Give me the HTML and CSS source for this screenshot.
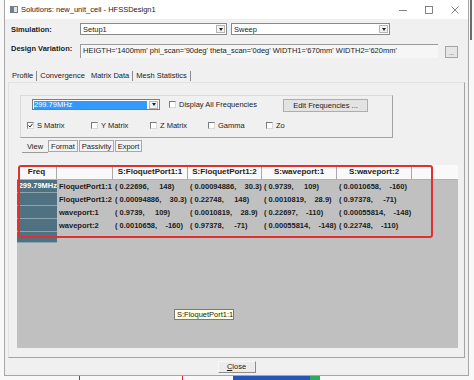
FILE: index.html
```html
<!DOCTYPE html>
<html lang="en">
<head>
    <meta charset="UTF-8">
    <title>Solutions: new_unit_ceil - HFSSDesign1</title>
    <link rel="stylesheet" href="styles.css">
</head>
<body>
    <div class="desk">
        <div class="window">
            <div class="titlebar">
                <svg class="app-icon" width="8" height="7" viewBox="0 0 8 7">
                    <rect x="0.5" y="0.5" width="7" height="6" fill="#e4e4e4" stroke="#7c7c7c"/>
                    <rect x="1" y="1" width="3" height="5" fill="#5d86a6"/>
                </svg>
                <span class="title">Solutions: new_unit_ceil - HFSSDesign1</span>
                <div class="controls">
                    <span class="ctl"><svg width="8" height="8" viewBox="0 0 8 8"><line x1="0" y1="4.5" x2="8" y2="4.5" stroke="#666" stroke-width="0.8"/></svg></span>
                    <span class="ctl"><svg width="8" height="8" viewBox="0 0 8 8"><rect x="0.5" y="0.5" width="7" height="7" fill="none" stroke="#666" stroke-width="0.8"/></svg></span>
                    <span class="ctl"><svg width="8" height="8" viewBox="0 0 8 8"><path d="M0.5 0.5 L7.5 7.5 M7.5 0.5 L0.5 7.5" stroke="#666" stroke-width="0.8"/></svg></span>
                </div>
            </div>

            <div class="row sim-row">
                <span class="lbl">Simulation:</span>
                <div class="combo setup"><span class="txt">Setup1</span><i class="arrow"></i></div>
                <div class="combo sweep"><span class="txt">Sweep</span><i class="arrow"></i></div>
            </div>

            <div class="row var-row">
                <span class="lbl">Design Variation:</span>
                <div class="varfield">HEIGTH='1400mm' phi_scan='90deg' theta_scan='0deg' WIDTH1='670mm' WIDTH2='620mm'</div>
                <button class="dots">...</button>
            </div>

            <div class="tabs">
                <span class="tab">Profile</span><span class="sep"></span>
                <span class="tab">Convergence</span>
                <span class="tab active">Matrix Data</span><span class="sep"></span>
                <span class="tab">Mesh Statistics</span><span class="sep"></span>
            </div>

            <div class="panel">
                <div class="group">
                    <div class="group-row">
                        <div class="freq-select"><span class="sel">299.79MHz</span><i class="arrow"></i></div>
                        <label class="check all-freq"><span class="box"></span>Display All Frequencies</label>
                        <button class="edit-btn">Edit Frequencies ...</button>
                    </div>
                    <div class="checks">
                        <label class="check w64"><span class="box on"><svg width="5" height="5" viewBox="0 0 5 5"><path d="M0.5 2.5 L2 4 L4.5 0.8" fill="none" stroke="#222" stroke-width="1"/></svg></span>S Matrix</label>
                        <label class="check w59"><span class="box"></span>Y Matrix</label>
                        <label class="check w58"><span class="box"></span>Z Matrix</label>
                        <label class="check w58"><span class="box"></span>Gamma</label>
                        <label class="check"><span class="box"></span>Zo</label>
                    </div>
                </div>

                <div class="subtabs">
                    <span class="stab current">View</span>
                    <span class="stab fmt">Format</span>
                    <span class="stab pas">Passivity</span>
                    <span class="stab exp">Export</span>
                </div>

                <div class="subpanel">
                    <div class="grid">
                        <div class="grow head">
                            <span class="hc">Freq</span>
                            <span class="hc"></span>
                            <span class="hc">S:FloquetPort1:1</span>
                            <span class="hc">S:FloquetPort1:2</span>
                            <span class="hc">S:waveport:1</span>
                            <span class="hc">S:waveport:2</span>
                            <span class="hc last"></span>
                        </div>
                        <div class="grow">
                            <span class="fc">299.79MHz</span>
                            <span class="rc">FloquetPort1:1</span>
                            <span class="vc">( 0.22696,     148)</span>
                            <span class="vc">( 0.00094886,    30.3)</span>
                            <span class="vc">( 0.9739,     109)</span>
                            <span class="vc">( 0.0010658,    -160)</span>
                        </div>
                        <div class="grow">
                            <span class="fc"></span>
                            <span class="rc">FloquetPort1:2</span>
                            <span class="vc">( 0.00094886,    30.3)</span>
                            <span class="vc">( 0.22748,     148)</span>
                            <span class="vc">( 0.0010819,    28.9)</span>
                            <span class="vc">( 0.97378,     -71)</span>
                        </div>
                        <div class="grow">
                            <span class="fc"></span>
                            <span class="rc">waveport:1</span>
                            <span class="vc">( 0.9739,     109)</span>
                            <span class="vc">( 0.0010819,    28.9)</span>
                            <span class="vc">( 0.22697,    -110)</span>
                            <span class="vc">( 0.00055814,    -148)</span>
                        </div>
                        <div class="grow">
                            <span class="fc"></span>
                            <span class="rc">waveport:2</span>
                            <span class="vc">( 0.0010658,    -160)</span>
                            <span class="vc">( 0.97378,     -71)</span>
                            <span class="vc">( 0.00055814,    -148)</span>
                            <span class="vc">( 0.22748,    -110)</span>
                        </div>
                        <div class="grow tail">
                            <span class="fc"></span>
                        </div>
                    </div>
                    <div class="redmark"></div>
                    <div class="tooltip">S:FloquetPort1:1</div>
                </div>
            </div>

            <div class="footer">
                <button class="close-btn"><u>C</u>lose</button>
            </div>
        </div>
        <div class="edge"><div class="edge-line"></div></div>
    </div>
    <div class="taskbar">
        <span class="tb-gap a"></span><span class="tb-line"></span>
        <span class="tb-gap b"></span><span class="tb-red"></span>
        <span class="tb-gap c"></span><span class="tb-blue"></span><span class="tb-green"></span>
    </div>
</body>
</html>
```

FILE: styles.css
```css
* {
    box-sizing: border-box;
}
body {
    margin: 0;
    width: 474px;
    height: 380px;
    overflow: hidden;
    background: #f8f8f8;
    font-family: "Liberation Sans", Arial, sans-serif;
    font-size: 7.5px;
    color: #1b1b1b;
}
button {
    font-family: inherit;
    font-size: inherit;
    color: inherit;
    padding: 0;
}
.desk {
    display: flex;
    height: 376px;
}
.window {
    margin-left: 4px;
    width: 465px;
    height: 376px;
    background: #f0f0f0;
    border: 1px solid #a6a6a6;
    border-top: none;
}
.edge {
    width: 5px;
}
.edge-line {
    margin-left: 1px;
    width: 2px;
    height: 40px;
    background: #6c6c6c;
}

/* title bar */
.titlebar {
    height: 19px;
    background: #fff;
    display: flex;
    align-items: center;
}
.app-icon {
    margin-left: 5px;
}
.title {
    margin-left: 3px;
    color: #222;
}
.controls {
    margin-left: auto;
    display: flex;
}
.ctl {
    width: 26px;
    height: 19px;
    display: flex;
    align-items: center;
    justify-content: center;
}

/* form rows */
.row {
    display: flex;
    align-items: center;
    padding-left: 6px;
}
.lbl {
    width: 69px;
    font-weight: bold;
}
.sim-row {
    margin-top: 4px;
    height: 12px;
}
.combo {
    height: 12px;
    border: 1px solid #8a8a8a;
    background: #fff;
    display: flex;
    align-items: center;
    padding-left: 2px;
}
.combo .txt {
    flex: 1;
}
.setup {
    width: 147px;
    margin-right: 4px;
}
.sweep {
    width: 159px;
}
.arrow {
    width: 9px;
    height: 8px;
    margin-right: 1px;
    border: 1px solid #b5b5b5;
    background: #f2f2f2;
    display: flex;
    align-items: center;
    justify-content: center;
}
.arrow::after {
    content: "";
    border-left: 2px solid transparent;
    border-right: 2px solid transparent;
    border-top: 3px solid #222;
}
.var-row {
    margin-top: 9px;
    height: 14px;
    align-items: stretch;
}
.varfield {
    width: 358px;
    height: 14px;
    border-top: 1px solid #9a9a9a;
    border-left: 1px solid #9a9a9a;
    background: #f6f6f6;
    padding-left: 2px;
    line-height: 12px;
    white-space: nowrap;
    overflow: hidden;
}
.dots {
    margin-left: 7px;
    margin-top: 2px;
    width: 13px;
    height: 12px;
    border: 1px solid #a5a5a5;
    background: #e6e6e6;
    font-size: 6px;
    line-height: 12px;
}

/* main tabs */
.tabs {
    margin-top: 11px;
    height: 13px;
    padding-left: 7px;
    display: flex;
    align-items: center;
}
.sep {
    width: 1px;
    height: 10px;
    background: #8c8c8c;
    margin: 0 3px;
}
.tab.active {
    margin-left: 6px;
}
.panel {
    margin-left: 3px;
    width: 457px;
    height: 276px;
    border: 1px solid #a3a3a3;
    border-left-color: #e2e2e2;
    border-top-color: #e2e2e2;
}

/* group box */
.group {
    margin: 12px 0 0 11px;
    width: 373px;
    height: 43px;
    border: 1px solid #a3a3a3;
    border-left-color: #d9d9d9;
    border-top-color: #d9d9d9;
    padding: 3px 0 0 6px;
}
.group-row {
    display: flex;
    align-items: flex-start;
    height: 13px;
}
.freq-select {
    margin-left: 5px;
    width: 128px;
    height: 11px;
    border: 1px solid #7c7c7c;
    background: #fff;
    display: flex;
    align-items: center;
    padding: 0 0 0 1px;
}
.sel {
    flex: 1;
    height: 8px;
    line-height: 8px;
    background: #3399ff;
    color: #fff;
    margin-right: 2px;
}
.freq-select .arrow {
    height: 8px;
}
.check {
    display: flex;
    align-items: center;
    height: 9px;
}
.box {
    width: 7px;
    height: 7px;
    border: 1px solid #7a7a7a;
    border-right-color: #d8d8d8;
    border-bottom-color: #d8d8d8;
    background: #fff;
    margin-right: 3px;
    display: flex;
    align-items: center;
    justify-content: center;
}
.all-freq {
    margin-left: 9px;
    margin-top: 1px;
}
.edit-btn {
    margin-left: auto;
    margin-right: 24px;
    width: 85px;
    height: 13px;
    border: 1px solid #adadad;
    background: #e3e3e3;
    line-height: 11px;
}
.checks {
    margin-top: 9px;
    display: flex;
}
.w64 { width: 64px; }
.w59 { width: 59px; }
.w58 { width: 58px; }

/* sub tabs */
.subtabs {
    margin: 2px 0 0 13px;
    display: flex;
    height: 12px;
}
.stab {
    height: 12px;
    line-height: 11px;
    border: 1px solid #a8a8a8;
    text-align: center;
    background: #f3f3f3;
}
.stab.current {
    width: 26px;
    border: none;
    border-bottom: 1px solid #9a9a9a;
    line-height: 13px;
    height: 13px;
    background: none;
}
.fmt { width: 30px; }
.pas { width: 35px; margin-left: 1px; }
.exp { width: 27px; margin-left: 1px; }
.subpanel {
    position: relative;
    margin-left: 8px;
    width: 442px;
    height: 198px;
    padding-top: 13px;
}

/* grid */
.grid {
    width: 441px;
    height: 183px;
    background: #c0c0c0;
}
.grow {
    display: grid;
    grid-template-columns: 40px 56px 75px 74px 75px 75px 46px;
    height: 13px;
}
.grow.head {
    height: 15px;
    background: #f9f9f9;
    border-bottom: 1px solid #b0b0b0;
}
.grow.tail {
    height: 11px;
}
.hc {
    font-size: 8px;
    font-weight: bold;
    text-align: center;
    line-height: 14px;
    border-right: 1px solid #a9a9a9;
    color: #222;
}
.hc.last {
    border-right: none;
}
.fc {
    background: #4f7181;
    border-bottom: 1px solid #8ba4b0;
    color: #fff;
    font-weight: bold;
    text-align: right;
    white-space: nowrap;
    overflow: hidden;
    line-height: 12px;
    direction: rtl;
}
.rc, .vc {
    font-weight: bold;
    line-height: 13px;
    white-space: pre;
    overflow: hidden;
}
.rc {
    padding-left: 2px;
}
.vc {
    padding-left: 2px;
}
.redmark {
    position: absolute;
    left: 1px;
    top: 13px;
    width: 415px;
    height: 73px;
    border: 2px solid #e2302f;
    border-radius: 3px;
}
.tooltip {
    position: absolute;
    left: 157px;
    top: 157px;
    width: 60px;
    height: 11px;
    background: #ffffe1;
    border: 1px solid #7a7a7a;
    padding-left: 2px;
    line-height: 9px;
}

/* footer */
.footer {
    display: flex;
    justify-content: center;
    padding-top: 3px;
}
.close-btn {
    width: 38px;
    height: 12px;
    border: 1px solid #8c8c8c;
    border-left-color: #f8f8f8;
    border-top-color: #f8f8f8;
    background: #ececec;
    line-height: 10px;
}

/* strip under the window */
.taskbar {
    display: flex;
    height: 4px;
}
.tb-gap.a { width: 79px; }
.tb-gap.b { width: 102px; }
.tb-gap.c { width: 50px; }
.tb-line { width: 1px; background: #555; }
.tb-red { width: 1px; background: #d23; }
.tb-blue { width: 77px; background: #2656b6; }
.tb-green { width: 10px; background: #2eaa5c; }
```
